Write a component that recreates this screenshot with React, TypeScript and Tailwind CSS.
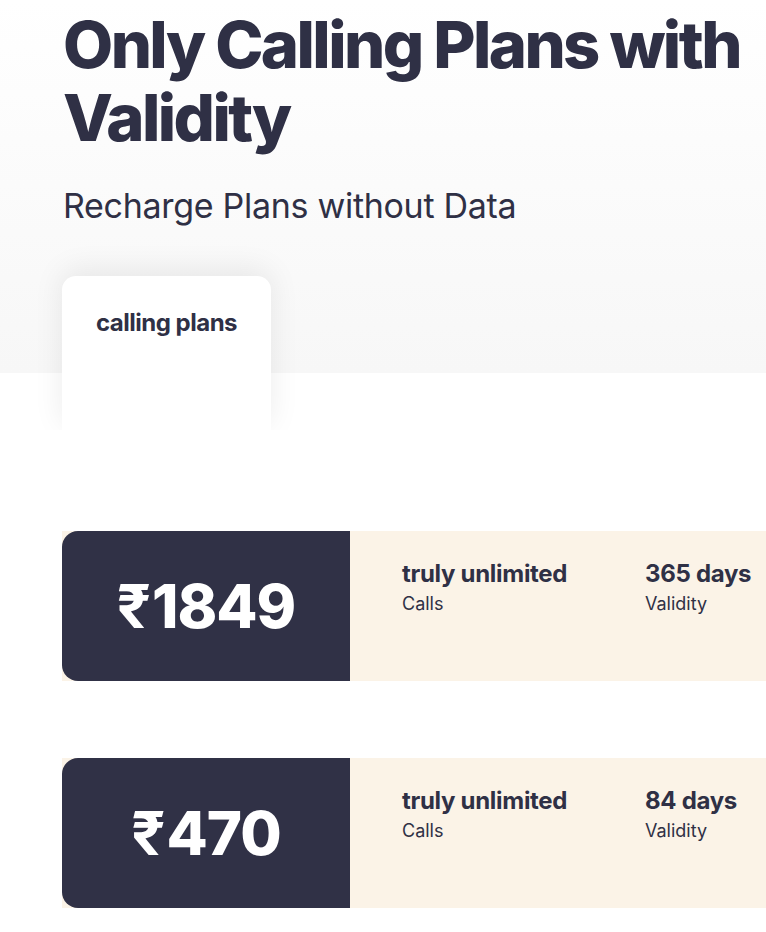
import React from "react";

const plans = [
  { price: "1849", days: "365 days" },
  { price: "470", days: "84 days" },
];

export default function App() {
  return (
    <div className="w-[766px] h-[932px] overflow-hidden bg-white text-[#2f3045]" style={{ fontFamily: "Inter, 'Noto Sans', sans-serif" }}>
      <div className="h-[373px] bg-gradient-to-b from-white to-[#f7f7f7] pl-[63px] pt-[8px]">
        <h1 className="text-[65px] leading-[73px] font-extrabold tracking-[-2.6px] whitespace-nowrap">
          Only Calling Plans with
          <br />
          Validity
        </h1>
        <p className="mt-[32px] text-[34px] leading-[40px] font-normal tracking-[-0.3px]">Recharge Plans without Data</p>
      </div>
      <div className="relative -mt-[97px] pl-[62px]">
        <div className="w-[209px] h-[154px] rounded-t-[14px] bg-white shadow-[0_-6px_30px_rgba(0,0,0,0.08)] pt-[29px] text-center">
          <span className="text-[24px] font-bold tracking-[-0.5px]">calling plans</span>
        </div>
      </div>
      <div className="relative flex flex-col gap-[77px] pl-[62px] pt-[101px] bg-white">
        {plans.map((p) => (
          <div key={p.price} className="flex h-[150px] w-[740px] bg-[#fbf3e7]">
            <div className="w-[288px] rounded-l-[16px] bg-[#303146] flex items-center justify-center text-white text-[60px] font-extrabold tracking-[-1px]">
              <span className="font-bold mr-[2px]">₹</span>{p.price}
            </div>
            <div className="flex pl-[52px] pt-[28px]">
              <div className="w-[243px]">
                <div className="text-[24px] leading-[30px] font-bold tracking-[-0.3px]">truly unlimited</div>
                <div className="text-[18px] leading-[24px] mt-[3px]">Calls</div>
              </div>
              <div>
                <div className="text-[24px] leading-[30px] font-bold tracking-[-0.3px]">{p.days}</div>
                <div className="text-[18px] leading-[24px] mt-[3px]">Validity</div>
              </div>
            </div>
          </div>
        ))}
      </div>
    </div>
  );
}
